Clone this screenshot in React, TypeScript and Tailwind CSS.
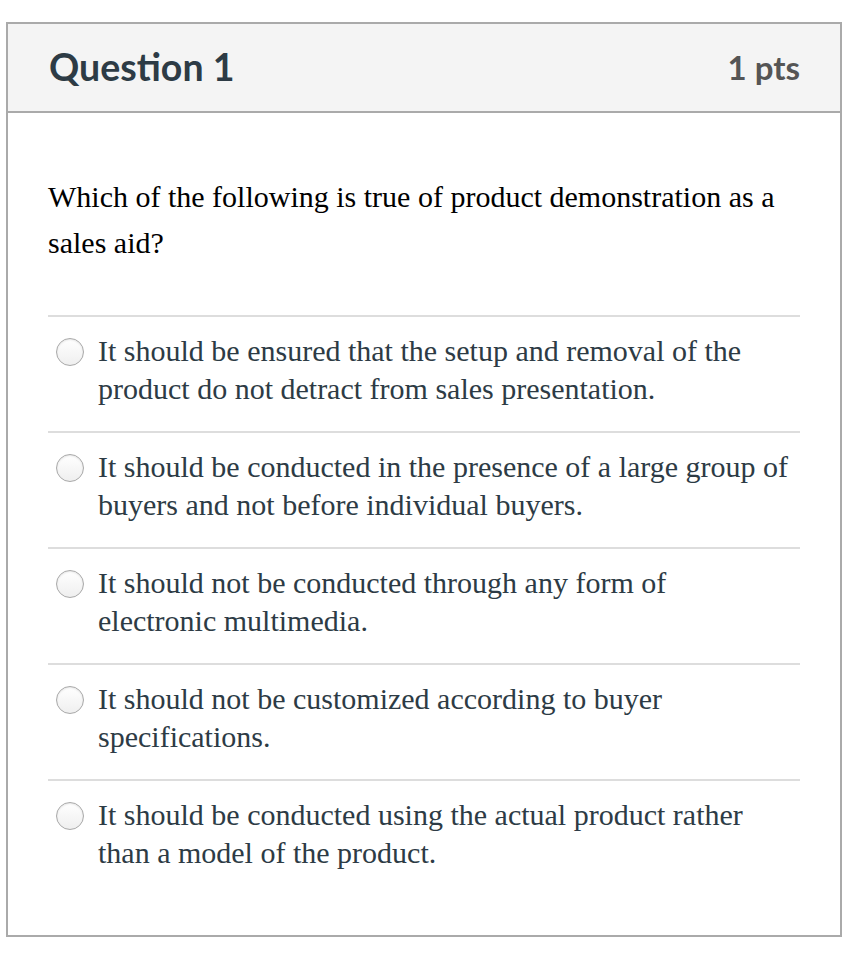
import React from 'react';

const ANSWERS = [
  'It should be ensured that the setup and removal of the product do not detract from sales presentation.',
  'It should be conducted in the presence of a large group of buyers and not before individual buyers.',
  'It should not be conducted through any form of electronic multimedia.',
  'It should not be customized according to buyer specifications.',
  'It should be conducted using the actual product rather than a model of the product.',
];

function Radio() {
  return (
    <span className="mt-[6px] block h-[28px] w-[28px] shrink-0 rounded-full border border-[#a9a9a9] bg-gradient-to-b from-white to-[#efefef] shadow-[inset_0_1px_2px_rgba(0,0,0,0.1)]" />
  );
}

export default function App() {
  return (
    <div className="min-h-[956px] bg-white pl-[6px] pt-[22px]">
      <div className="w-[836px] border-2 border-[#aaaaaa]">
        {/* header */}
        <div
          className="flex h-[89px] items-center justify-between border-b-2 border-[#aaaaaa] bg-[#f4f4f4] pl-[41px] pr-[40px]"
          style={{ fontFamily: 'Lato, "Liberation Sans", sans-serif' }}
        >
          <span className="text-[37.5px] font-bold text-[#2d3b45]">Question 1</span>
          <span className="text-[33px] font-bold text-[#555555]">1 pts</span>
        </div>

        {/* body */}
        <div className="px-[40px] pb-[40px] pt-[61px]" style={{ fontFamily: '"Liberation Serif", "Times New Roman", serif' }}>
          <p className="mb-[49px] text-[30px] leading-[46px] text-black">
            Which of the following is true of product demonstration as a sales aid?
          </p>
          <div>
            {ANSWERS.map((a) => (
              <div key={a} className="flex gap-[14px] border-t-2 border-[#dddddd] pb-[23px] pl-[8px] pr-[10px] pt-[15px]">
                <Radio />
                <span className="text-[30px] leading-[38px] text-[#2d3b45]">{a}</span>
              </div>
            ))}
          </div>
        </div>
      </div>
    </div>
  );
}
